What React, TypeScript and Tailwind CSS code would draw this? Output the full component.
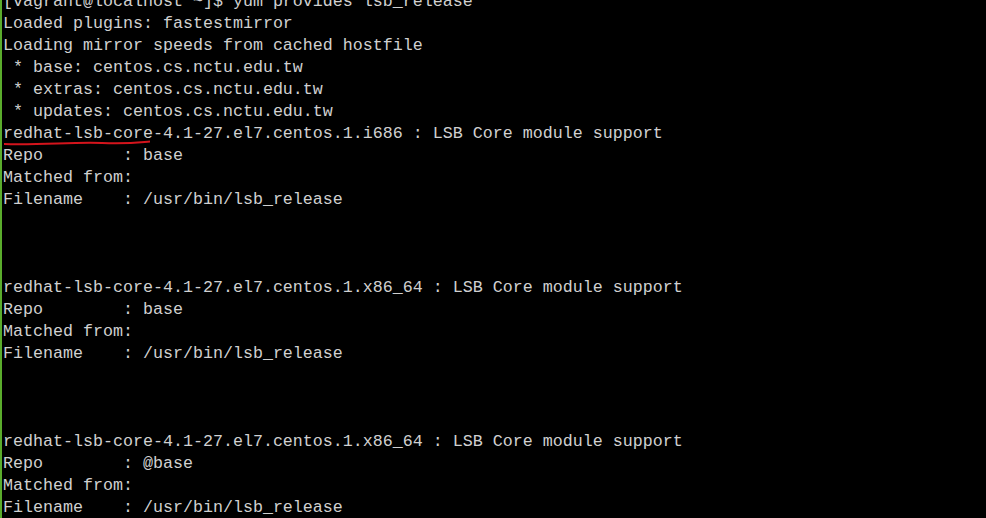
const LINES: string[] = [
  "[vagrant@localhost ~]$ yum provides lsb_release",
  "Loaded plugins: fastestmirror",
  "Loading mirror speeds from cached hostfile",
  " * base: centos.cs.nctu.edu.tw",
  " * extras: centos.cs.nctu.edu.tw",
  " * updates: centos.cs.nctu.edu.tw",
  "redhat-lsb-core-4.1-27.el7.centos.1.i686 : LSB Core module support",
  "Repo        : base",
  "Matched from:",
  "Filename    : /usr/bin/lsb_release",
  "",
  "",
  "",
  "redhat-lsb-core-4.1-27.el7.centos.1.x86_64 : LSB Core module support",
  "Repo        : base",
  "Matched from:",
  "Filename    : /usr/bin/lsb_release",
  "",
  "",
  "",
  "redhat-lsb-core-4.1-27.el7.centos.1.x86_64 : LSB Core module support",
  "Repo        : @base",
  "Matched from:",
  "Filename    : /usr/bin/lsb_release",
];

// Terminal output of yum provides
export default function App() {
  return (
    <div className="relative h-[518px] w-[986px] overflow-hidden border-l-2 border-[#5aac2c] bg-black">
      <pre className="-mt-[9px] pl-px font-['Liberation_Mono',monospace] text-[16.67px] leading-[22px] text-[#d0d0d0]">
        {LINES.map((line, i) => (
          <div key={i} className="h-[22px] whitespace-pre">
            {line}
          </div>
        ))}
      </pre>

      {/* Red underline drawn by hand */}
      <svg className="absolute left-0 top-[139px]" width="160" height="10">
        <path d="M2 5 C 40 6, 70 3, 100 4 S 140 3, 148 2.5" stroke="#d4141c" strokeWidth="2" fill="none" />
      </svg>
    </div>
  );
}
